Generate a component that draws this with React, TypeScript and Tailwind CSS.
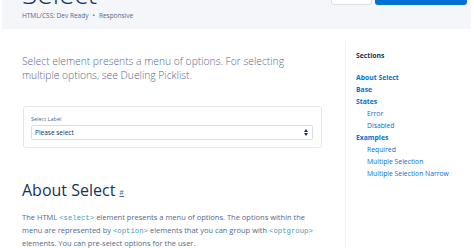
import React from "react";

const font = { fontFamily: '"Open Sans", "Noto Sans", sans-serif' };

function SelectArrows() {
  return (
    <svg width="4" height="7" viewBox="0 0 4 7" className="block">
      <path d="M0 3 L2 0 L4 3 Z" fill="#16325c" />
      <path d="M0 4 L2 7 L4 4 Z" fill="#16325c" />
    </svg>
  );
}

export default function App() {
  const code = "font-['Liberation_Mono',monospace] text-[#4a9ab8] text-[7.3px]";
  return (
    <div className="w-[474px] h-[248px] overflow-hidden bg-white" style={font}>
      {/* header band */}
      <div className="ml-[2px] w-[469px] h-[29px] bg-[#f4f6f9] flex justify-between overflow-hidden">
        <div className="pl-[20px] mt-[-21px]">
          <div className="h-[28px] text-[28px] leading-[28px] font-light text-[#16325c]">Select</div>
          <div className="mt-[4px] text-[6.5px] leading-[10px] text-[#54698d] flex gap-[4px]">
            <span>HTML/CSS: Dev Ready</span>
            <span>•</span>
            <span>Responsive</span>
          </div>
        </div>
        <div className="flex mt-[-12px] h-[17px] mr-[4px] gap-[3px]">
          <div className="w-[41px] h-[17px] bg-white border border-[#d8dde6] rounded-[3px]" />
          <div className="w-[92px] h-[17px] bg-[#0070d2] rounded-[3px]" />
        </div>
      </div>

      <div className="flex">
        {/* main column */}
        <div className="pl-[22px] w-[345px] shrink-0">
          <p className="mt-[25px] w-[300px] text-[10.3px] leading-[14px] font-light text-[#54698d]">
            Select element presents a menu of options. For selecting multiple options, see Dueling Picklist.
          </p>
          <div className="mt-[24px] ml-[1px] w-[299px] h-[42px] border border-[#e4e8ee] rounded-[3px] pt-[9px] pl-[7px] pr-[8px]">
            <div className="text-[5.5px] leading-[7px] text-[#54698d]">Select Label</div>
            <div className="mt-[2px] h-[15px] border border-[#d8dde6] rounded-[2px] flex items-center justify-between pl-[3px] pr-[4px]">
              <span className="text-[6.5px] text-[#16325c] font-medium">Please select</span>
              <SelectArrows />
            </div>
          </div>
          <div className="mt-[32px] h-[20px] flex items-end gap-[4px]">
            <h2 className="text-[16px] leading-[20px] text-[#16325c]">About Select</h2>
            <span className="text-[7px] leading-[10px] mb-[2px] underline text-[#54698d]">#</span>
          </div>
          <div className="mt-[11px] w-[310px] text-[7.5px] leading-[12px] text-[#54698d] whitespace-nowrap">
            <div>
              The HTML <span className={code}>&lt;select&gt;</span> element presents a menu of options. The options within the
            </div>
            <div>
              menu are represented by <span className={code}>&lt;option&gt;</span> elements that you can group with <span className={code}>&lt;optgroup&gt;</span>
            </div>
            <div>elements. You can pre-select options for the user.</div>
          </div>
        </div>

        {/* sidebar */}
        <div className="mt-[13px] border-l border-[#eef1f6] pl-[10px] h-[220px] text-[6.8px] leading-[12px]">
          <div className="mt-[8px] font-bold text-[#16325c]">Sections</div>
          <div className="mt-[10px] flex flex-col text-[#0070d2]">
            <span className="font-bold">About Select</span>
            <span className="font-bold">Base</span>
            <span className="font-bold">States</span>
            <span className="pl-[11px]">Error</span>
            <span className="pl-[11px]">Disabled</span>
            <span className="font-bold">Examples</span>
            <span className="pl-[11px]">Required</span>
            <span className="pl-[11px]">Multiple Selection</span>
            <span className="pl-[11px]">Multiple Selection Narrow</span>
          </div>
        </div>
      </div>
    </div>
  );
}
